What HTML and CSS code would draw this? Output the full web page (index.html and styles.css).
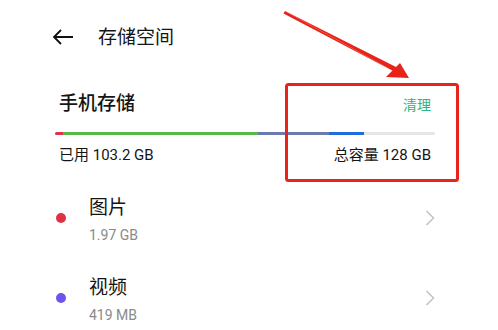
FILE: index.html
```html
<!DOCTYPE html>
<html lang="zh-CN">
<head>
<meta charset="UTF-8" />
<title>存储空间</title>
<link rel="stylesheet" href="styles.css">
</head>
<body>
<div class="page">
  <div class="header">
    <svg class="back" width="22" height="16" viewBox="0 0 22 16">
      <path d="M21 8H2M9 1L2 8l7 7" fill="none" stroke="#111" stroke-width="1.8"/>
    </svg>
    <div class="title">存储空间</div>
  </div>

  <div class="storage">
    <div class="storage-top">
      <div class="storage-name">手机存储</div>
      <div class="clean">清理</div>
    </div>
    <div class="bar">
      <span class="seg red" style="width:8px"></span>
      <span class="seg green" style="width:195px"></span>
      <span class="seg slate" style="width:71px"></span>
      <span class="seg blue" style="width:35px"></span>
    </div>
    <div class="storage-bottom">
      <div>已用 103.2 GB</div>
      <div>总容量 128 GB</div>
    </div>
  </div>

  <div class="list">
    <div class="item">
      <span class="dot dot-red"></span>
      <div class="item-text">
        <div class="item-name">图片</div>
        <div class="item-size">1.97 GB</div>
      </div>
      <svg class="chev" width="10" height="16" viewBox="0 0 10 16"><path d="M1.5 1l7 7-7 7" fill="none" stroke="#c4c4c4" stroke-width="1.6"/></svg>
    </div>
    <div class="item">
      <span class="dot dot-purple"></span>
      <div class="item-text">
        <div class="item-name">视频</div>
        <div class="item-size">419 MB</div>
      </div>
      <svg class="chev" width="10" height="16" viewBox="0 0 10 16"><path d="M1.5 1l7 7-7 7" fill="none" stroke="#c4c4c4" stroke-width="1.6"/></svg>
    </div>
  </div>

  <!-- annotation overlay -->
  <svg class="mark" width="498" height="330" viewBox="0 0 498 330">
    <path d="M285 11 L398 68 L395 72 Z" fill="#e8231a"/>
    <path d="M285 11 L283.5 13.5 L395 72 Z" fill="#e8231a"/>
    <path d="M409 78 L386 77 L400 63 Z" fill="#e8231a"/>
    <rect x="286.5" y="84.5" width="171" height="96" rx="2" fill="none" stroke="#e8231a" stroke-width="3"/>
  </svg>
</div>
</body>
</html>
```

FILE: styles.css
```css
* {
  margin: 0; padding: 0; box-sizing: border-box;
}
body {
  background: #fff;
  font-family: Roboto, "Noto Sans CJK SC", sans-serif;
  color: #151515;
}
.page {
  position: relative;
  width: 498px;
  height: 330px;
  overflow: hidden;
}
.header {
  height: 74px;
  display: flex;
  align-items: center;
  padding-left: 52px;
}
.back {
  margin-right: 24px;
}
.title {
  font-size: 19px;
  line-height: 1;
}
.storage {
  padding: 0 63px 0 55px;
}
.storage-top {
  display: flex;
  justify-content: space-between;
  align-items: center;
  height: 58px;
  padding-left: 4px;
}
.storage-name {
  font-size: 19px;
  font-weight: 500;
  line-height: 1;
}
.clean {
  font-size: 14px;
  color: #32b47a;
  line-height: 1;
  margin-top: 4px;
  padding-right: 4px;
}
.bar {
  display: flex;
  height: 3px;
  background: #e6e6e6;
  border-radius: 2px;
  overflow: hidden;
}
.seg { display: block; height: 100%; }
.red { background: #d9384c; }
.green { background: #58b94a; }
.slate { background: #6b7bb0; }
.blue { background: #1f6be0; }
.storage-bottom {
  display: flex;
  justify-content: space-between;
  padding: 11px 4px 0 4px;
  font-size: 15px;
  line-height: 18px;
}
.list {
  padding: 16px 63px 0 56px;
}
.item {
  display: flex;
  align-items: center;
  height: 80px;
}
.dot {
  width: 10px;
  height: 10px;
  border-radius: 50%;
  margin: 0 23px 4px 0;
}
.dot-red { background: #de3146; }
.dot-purple { background: #6a55ee; }
.item-text {
  flex: 1;
}
.item-name {
  font-size: 19px;
  line-height: 24px;
}
.item-size {
  font-size: 14px;
  color: #8a8a8a;
  line-height: 18px;
  margin-top: 6px;
}
.chev {
  margin-bottom: 4px;
}
.mark {
  position: absolute;
  left: 0;
  top: 0;
}
```
